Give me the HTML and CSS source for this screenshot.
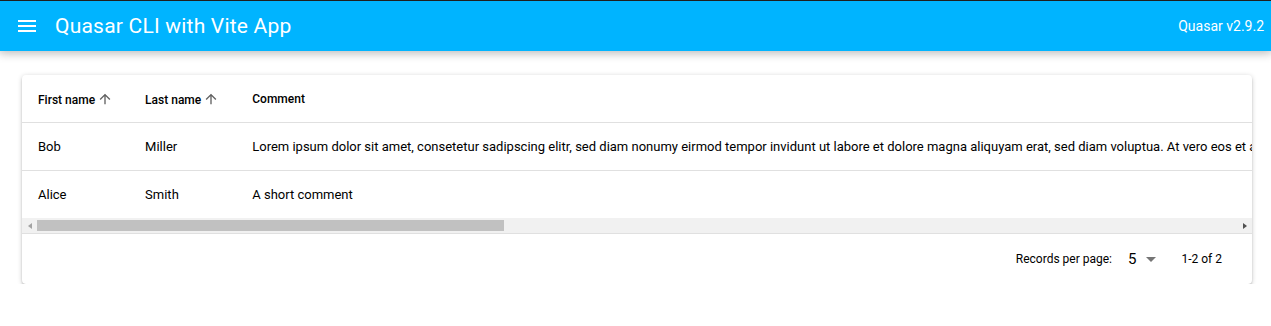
FILE: index.html
```html
<!DOCTYPE html>
<html>
<head>
<meta charset="utf-8">
<link rel="stylesheet" href="styles.css">
</head>
<body>
<header class="app-header">
  <button class="menu-btn" aria-label="Menu">
    <svg viewBox="0 0 24 24" width="24" height="24"><path fill="#fff" d="M3 18h18v-2H3v2zm0-5h18v-2H3v2zm0-7v2h18V6H3z"/></svg>
  </button>
  <div class="app-title">Quasar CLI with Vite App</div>
  <div class="app-version">Quasar v2.9.2</div>
</header>
<main class="page">
  <div class="card">
    <div class="table-scroll">
      <table class="data-table">
        <thead>
          <tr>
            <th>First name<svg class="sort" viewBox="0 0 24 24" width="16" height="16"><path d="M4 12l1.41 1.41L11 7.83V20h2V7.83l5.58 5.59L20 12l-8-8-8 8z"/></svg></th>
            <th>Last name<svg class="sort" viewBox="0 0 24 24" width="16" height="16"><path d="M4 12l1.41 1.41L11 7.83V20h2V7.83l5.58 5.59L20 12l-8-8-8 8z"/></svg></th>
            <th class="comment-col">Comment</th>
          </tr>
        </thead>
        <tbody>
          <tr>
            <td>Bob</td>
            <td>Miller</td>
            <td class="comment-col">Lorem ipsum dolor sit amet, consetetur sadipscing elitr, sed diam nonumy eirmod tempor invidunt ut labore et dolore magna aliquyam erat, sed diam voluptua. At vero eos et accusam et justo duo dolores et ea rebum. Stet clita kasd gubergren, no sea takimata sanctus est Lorem ipsum dolor sit amet. Lorem ipsum dolor sit amet, consetetur sadipscing elitr, sed diam nonumy eirmod tempor invidunt ut labore et dolore magna aliquyam erat, sed diam voluptua. At vero eos et accusam et justo duo dolores et ea rebum. Stet clita kasd gubergren</td>
          </tr>
          <tr>
            <td>Alice</td>
            <td>Smith</td>
            <td class="comment-col">A short comment</td>
          </tr>
        </tbody>
      </table>
    </div>
    <div class="hscroll">
      <div class="hscroll-btn"><span class="tri-left"></span></div>
      <div class="hscroll-track"><div class="hscroll-thumb" style="width: 467px"></div></div>
      <div class="hscroll-btn"><span class="tri-right"></span></div>
    </div>
    <div class="table-bottom">
      <span class="rpp-label">Records per page:</span>
      <span class="rpp-select">5 <svg viewBox="0 0 24 24" width="24" height="24"><path d="M7 10l5 5 5-5z"/></svg></span>
      <span class="range">1-2 of 2</span>
    </div>
  </div>
</main>
</body>
</html>
```
FILE: styles.css
```css
html, body {
  margin: 0;
  padding: 0;
}
body {
  font-family: Roboto, "Liberation Sans", sans-serif;
  color: #000;
  background: #fff;
  -webkit-font-smoothing: antialiased;
}
.app-header {
  display: flex;
  align-items: center;
  height: 50px;
  background: #00b4ff;
  border-top: 1px solid #1f1f1f;
  color: #fff;
  padding: 0 7px 0 10px;
  box-shadow: 0 0 10px 2px rgba(0,0,0,.2), 0 0 10px rgba(0,0,0,.14);
  position: relative;
  z-index: 2;
}
.menu-btn {
  background: none;
  border: 0;
  padding: 0 5px;
  margin: 0;
  width: 34px;
  height: 34px;
  display: flex;
  align-items: center;
  justify-content: center;
  cursor: pointer;
}
.app-title {
  flex: 1;
  font-size: 21px;
  letter-spacing: .01em;
  padding: 0 11px;
  line-height: 1;
}
.app-version {
  font-size: 14px;
}
.page {
  padding: 24px 19px 0 22px;
}
.card {
  border-radius: 4px;
  box-shadow: 0 1px 5px rgba(0,0,0,.2), 0 2px 2px rgba(0,0,0,.14), 0 3px 1px -2px rgba(0,0,0,.12);
  background: #fff;
  overflow: hidden;
}
.table-scroll {
  overflow: hidden;
}
.data-table {
  border-collapse: separate;
  border-spacing: 0;
  white-space: nowrap;
}
.data-table th {
  font-size: 12px;
  font-weight: 500;
  text-align: left;
  height: 47px;
  padding: 0 16px;
  border-bottom: 1px solid #e0e0e0;
  color: #000;
}
.data-table th .sort {
  vertical-align: -3px;
  margin-left: 2px;
  fill: #616161;
}
.data-table td {
  font-size: 13px;
  height: 47px;
  padding: 0 16px;
  border-bottom: 1px solid #e0e0e0;
}
.data-table .comment-col {
  padding-left: 17px;
}
.data-table tbody tr:last-child td {
  border-bottom: 0;
}
.hscroll {
  display: flex;
  height: 15px;
  background: #f1f1f1;
}
.hscroll-btn {
  width: 15px;
  flex: none;
  display: flex;
  align-items: center;
  justify-content: center;
}
.tri-left {
  width: 0;
  height: 0;
  border-top: 3.5px solid transparent;
  border-bottom: 3.5px solid transparent;
  border-right: 4px solid #a3a3a3;
}
.tri-right {
  width: 0;
  height: 0;
  border-top: 3.5px solid transparent;
  border-bottom: 3.5px solid transparent;
  border-left: 4px solid #505050;
}
.hscroll-track {
  flex: 1;
  padding-top: 2px;
}
.hscroll-thumb {
  height: 11px;
  background: #c1c1c1;
}
.table-bottom {
  display: flex;
  align-items: center;
  justify-content: flex-end;
  height: 50px;
  border-top: 1px solid #e0e0e0;
  padding: 0 30px 0 16px;
  font-size: 12px;
  color: #000;
}
.rpp-label {
  margin-right: 16px;
}
.rpp-select {
  display: flex;
  align-items: center;
  font-size: 15px;
  margin-right: 18px;
}
.rpp-select svg {
  fill: #757575;
  margin-left: 3px;
}
```
